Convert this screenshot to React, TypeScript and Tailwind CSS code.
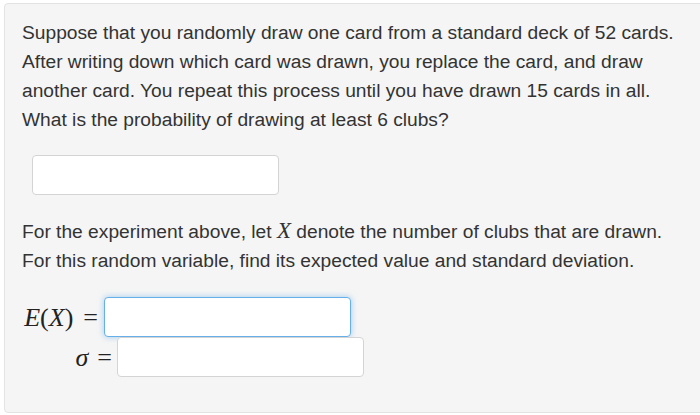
import React from 'react';

export default function App() {
  return (
    <div className="w-[700px] h-[415px] bg-white overflow-hidden pl-[4px] pt-[3px]">
      <div className="w-[720px] h-[410px] bg-[#f5f5f5] border border-[#e3e3e3] rounded-[4px] pl-[17px] pt-[14px] text-[#333] text-[19.2px] leading-[29px] font-['Liberation_Sans',Arial,sans-serif]">
        <p className="whitespace-nowrap">
          Suppose that you randomly draw one card from a standard deck of 52 cards.
          <br />
          After writing down which card was drawn, you replace the card, and draw
          <br />
          another card. You repeat this process until you have drawn 15 cards in all.
          <br />
          What is the probability of drawing at least 6 clubs?
        </p>

        <div className="mt-[21px] ml-[10px] w-[247px] h-[40px] bg-white border border-[#d4d4d4] rounded-[4px]" />

        <p className="mt-[21px] whitespace-nowrap">
          For the experiment above, let{' '}
          <span className="font-['Liberation_Serif',serif] italic text-[23px]">X</span> denote the number of clubs that
          are drawn.
          <br />
          For this random variable, find its expected value and standard deviation.
        </p>

        <div className="mt-[22px] flex flex-col text-[#222]">
          <div className="flex items-center h-[40px]">
            <span className="w-[82px] flex items-center justify-end gap-[10px] pr-[6px] font-['Liberation_Serif',serif] text-[26px] whitespace-nowrap">
              <span>
                <span className="italic">E</span>(<span className="italic">X</span>)
              </span>
              <span>=</span>
            </span>
            <div className="w-[247px] h-[40px] bg-white border border-[#66afe9] rounded-[4px] shadow-[0_0_6px_rgba(102,175,233,0.6)]" />
          </div>
          <div className="flex items-center h-[40px]">
            <span className="w-[95px] flex items-center justify-end gap-[9px] pr-[5px] font-['Liberation_Serif',serif] text-[26px] whitespace-nowrap">
              <span className="italic">σ</span>
              <span>=</span>
            </span>
            <div className="w-[247px] h-[40px] bg-white border border-[#d4d4d4] rounded-[4px]" />
          </div>
        </div>
      </div>
    </div>
  );
}
